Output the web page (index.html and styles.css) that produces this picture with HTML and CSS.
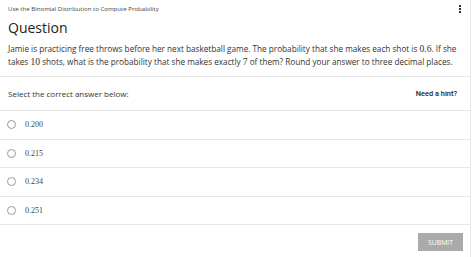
FILE: index.html
```html
<!DOCTYPE html>
<html>
<head>
<meta charset="utf-8">
<link rel="stylesheet" href="styles.css">
</head>
<body>
<div class="page">
  <div class="head">
    <div class="crumb">Use the Binomial Distribution to Compute Probability</div>
    <div class="kebab"><span></span><span></span><span></span></div>
  </div>
  <h1 class="title">Question</h1>
  <p class="prompt">Jamie is practicing free throws before her next basketball game. The probability that she makes each shot is <span class="m">0.6</span>. If she takes <span class="m">10</span> shots, what is the probability that she makes exactly <span class="m">7</span> of them? Round your answer to three decimal places.</p>
  <div class="select-row">
    <span class="select">Select the correct answer below:</span>
    <span class="hint">Need a hint?</span>
  </div>
  <ul class="options">
    <li class="opt"><span class="radio"></span><span class="val">0.200</span></li>
    <li class="opt"><span class="radio"></span><span class="val">0.215</span></li>
    <li class="opt"><span class="radio"></span><span class="val">0.234</span></li>
    <li class="opt"><span class="radio"></span><span class="val">0.251</span></li>
  </ul>
  <div class="footer">
    <button class="submit">SUBMIT</button>
  </div>
</div>
</body>
</html>
```

FILE: styles.css
```css
html, body {
  margin: 0;
  padding: 0;
  background: #fff;
}
body {
  font-family: "Open Sans", "Noto Sans", sans-serif;
  color: #333;
}
.page {
  width: 470px;
  height: 257px;
  border-right: 1px solid #e8e8e8;
  overflow: hidden;
}
.head {
  display: flex;
  justify-content: space-between;
  align-items: flex-start;
  padding: 5px 9px 0 8px;
  height: 11px;
}
.crumb {
  font-size: 6.1px;
  line-height: 7px;
  color: #444;
}
.kebab {
  display: flex;
  flex-direction: column;
  gap: 1px;
}
.kebab span {
  width: 2px;
  height: 2px;
  background: #333;
}
.title {
  margin: 3px 0 0 8px;
  font-size: 14px;
  font-weight: 400;
  line-height: 18px;
  color: #222;
}
.prompt {
  margin: 5px 0 0 8px;
  width: 460px;
  font-size: 8.2px;
  line-height: 13px;
  color: #333;
  height: 34px;
}
.m {
  font-family: "Liberation Serif", "DejaVu Serif", serif;
  font-size: 9.6px;
  line-height: 1;
}
.select-row {
  border-top: 1px solid #e6e6e6;
  display: flex;
  justify-content: space-between;
  align-items: center;
  height: 33px;
  padding: 0 13px 0 8px;
}
.select {
  font-size: 8px;
  color: #333;
}
.hint {
  font-family: Roboto, "Liberation Sans", sans-serif;
  font-size: 7.4px;
  font-weight: 500;
  color: #222;
}
.options {
  list-style: none;
  margin: 0;
  padding: 0;
  border-bottom: 1px solid #e6e6e6;
}
.opt {
  border-top: 1px solid #e6e6e6;
  height: 27.5px;
  display: flex;
  align-items: center;
  padding-left: 7px;
}
.radio {
  width: 7px;
  height: 7px;
  border: 1.2px solid #999;
  border-radius: 50%;
  margin-right: 9px;
}
.val {
  font-family: "Liberation Serif", "DejaVu Serif", serif;
  font-size: 8px;
  color: #444;
}
.footer {
  display: flex;
  justify-content: flex-end;
  padding: 8px 7px 0 0;
}
.submit {
  width: 45px;
  height: 18px;
  border: none;
  background: #aaaaaa;
  color: #fff;
  font-family: "Open Sans", sans-serif;
  font-size: 6.8px;
  padding: 0;
}
```
